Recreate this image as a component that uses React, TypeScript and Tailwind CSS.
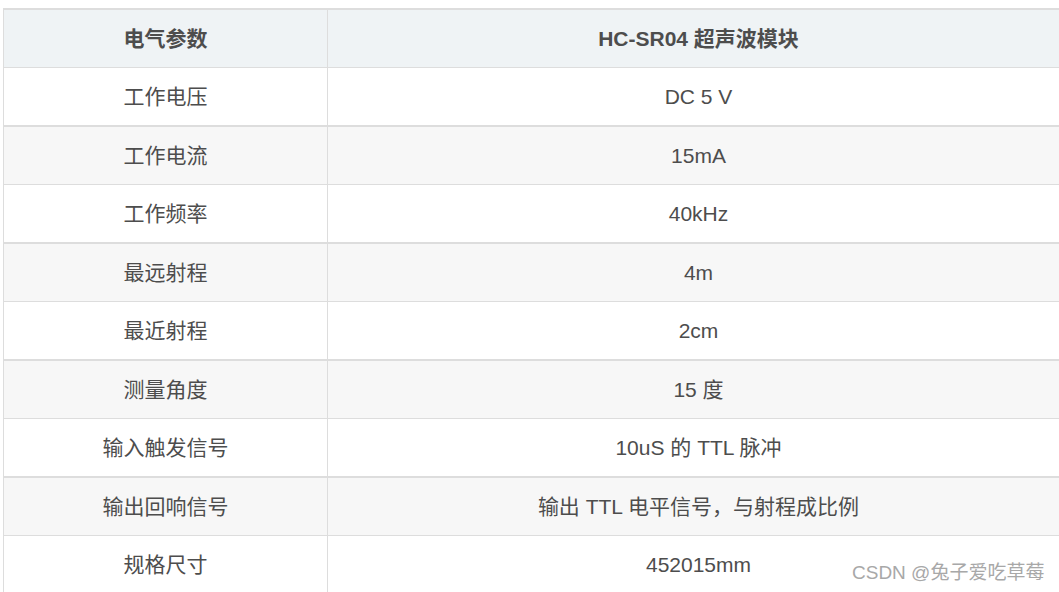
import React from 'react';

interface Row {
  name: string;
  value: string;
}

const rows: Row[] = [
  { name: '工作电压', value: 'DC 5 V' },
  { name: '工作电流', value: '15mA' },
  { name: '工作频率', value: '40kHz' },
  { name: '最远射程', value: '4m' },
  { name: '最近射程', value: '2cm' },
  { name: '测量角度', value: '15 度' },
  { name: '输入触发信号', value: '10uS 的 TTL 脉冲' },
  { name: '输出回响信号', value: '输出 TTL 电平信号，与射程成比例' },
  { name: '规格尺寸', value: '452015mm' },
];

const font = { fontFamily: '"Liberation Sans", "Noto Sans CJK SC", sans-serif' };

export default function App() {
  return (
    <div className="relative w-[1059px] h-[592px] overflow-hidden bg-white" style={font}>
      <div className="mt-[8px] ml-[3px] w-[1066px] text-[21px]">
        {/* header */}
        <div className="flex h-[59px] border-t-2 border-[#dddddd] bg-[#eff3f5] font-bold text-[#4d4d4d]">
          <div className="w-[325px] flex items-center justify-center border-l border-r border-[#dddddd]">
            电气参数
          </div>
          <div className="flex-1 flex items-center justify-center">HC-SR04 超声波模块</div>
        </div>

        {rows.map((row, i) => {
          const even = i % 2 === 1;
          return (
            <div
              key={row.name}
              className={
                even
                  ? 'flex h-[59px] border-t-2 border-[#dddddd] bg-[#f7f7f7] text-[#4d4d4d]'
                  : 'flex h-[58px] border-t border-[#dddddd] bg-white text-[#4d4d4d]'
              }
            >
              <div className="w-[325px] flex items-center justify-center border-l border-r border-[#dddddd]">
                {row.name}
              </div>
              <div className="flex-1 flex items-center justify-center">{row.value}</div>
            </div>
          );
        })}
      </div>

      {/* watermark */}
      <div className="absolute left-[852px] top-[561px] text-[19px] leading-[24px] text-[#a8a8a8]">
        CSDN @兔子爱吃草莓
      </div>
    </div>
  );
}
